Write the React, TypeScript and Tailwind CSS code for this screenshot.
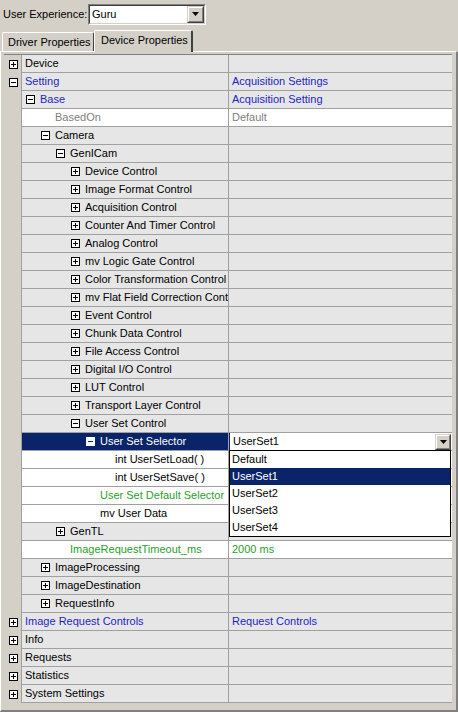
import React from 'react';

type Expander = 'plus' | 'minus' | null;

interface RowData {
  label: string;
  level: number;
  exp: Expander;
  color?: string;
  value?: string;
  valueColor?: string;
  white?: boolean;
  selected?: boolean;
}

const BLUE = 'text-[#1f1fc6]';
const GREEN = 'text-[#2a9f2a]';
const GRAY = 'text-[#808080]';

const ROWS: RowData[] = [
  { label: 'Device', level: 0, exp: 'plus' },
  { label: 'Setting', level: 0, exp: 'minus', color: BLUE, value: 'Acquisition Settings', valueColor: BLUE },
  { label: 'Base', level: 1, exp: 'minus', color: BLUE, value: 'Acquisition Setting', valueColor: BLUE },
  { label: 'BasedOn', level: 2, exp: null, color: GRAY, value: 'Default', valueColor: GRAY, white: true },
  { label: 'Camera', level: 2, exp: 'minus' },
  { label: 'GenICam', level: 3, exp: 'minus' },
  { label: 'Device Control', level: 4, exp: 'plus' },
  { label: 'Image Format Control', level: 4, exp: 'plus' },
  { label: 'Acquisition Control', level: 4, exp: 'plus' },
  { label: 'Counter And Timer Control', level: 4, exp: 'plus' },
  { label: 'Analog Control', level: 4, exp: 'plus' },
  { label: 'mv Logic Gate Control', level: 4, exp: 'plus' },
  { label: 'Color Transformation Control', level: 4, exp: 'plus' },
  { label: 'mv Flat Field Correction Control', level: 4, exp: 'plus' },
  { label: 'Event Control', level: 4, exp: 'plus' },
  { label: 'Chunk Data Control', level: 4, exp: 'plus' },
  { label: 'File Access Control', level: 4, exp: 'plus' },
  { label: 'Digital I/O Control', level: 4, exp: 'plus' },
  { label: 'LUT Control', level: 4, exp: 'plus' },
  { label: 'Transport Layer Control', level: 4, exp: 'plus' },
  { label: 'User Set Control', level: 4, exp: 'minus' },
  { label: 'User Set Selector', level: 5, exp: 'minus', selected: true },
  { label: 'int UserSetLoad( )', level: 6, exp: null, white: true },
  { label: 'int UserSetSave( )', level: 6, exp: null, white: true },
  { label: 'User Set Default Selector', level: 5, exp: null, color: GREEN, white: true },
  { label: 'mv User Data', level: 5, exp: null, white: true },
  { label: 'GenTL', level: 3, exp: 'plus' },
  { label: 'ImageRequestTimeout_ms', level: 3, exp: null, color: GREEN, value: '2000 ms', valueColor: GREEN, white: true },
  { label: 'ImageProcessing', level: 2, exp: 'plus' },
  { label: 'ImageDestination', level: 2, exp: 'plus' },
  { label: 'RequestInfo', level: 2, exp: 'plus' },
  { label: 'Image Request Controls', level: 0, exp: 'plus', color: BLUE, value: 'Request Controls', valueColor: BLUE },
  { label: 'Info', level: 0, exp: 'plus' },
  { label: 'Requests', level: 0, exp: 'plus' },
  { label: 'Statistics', level: 0, exp: 'plus' },
  { label: 'System Settings', level: 0, exp: 'plus' },
];

const INDENT = ['pl-[3px]', 'pl-[4px]', 'pl-[19px]', 'pl-[34px]', 'pl-[49px]', 'pl-[64px]', 'pl-[79px]'];

const USER_SETS = ['Default', 'UserSet1', 'UserSet2', 'UserSet3', 'UserSet4'];

const Box: React.FC<{ type: 'plus' | 'minus'; inverted?: boolean }> = ({ type, inverted }) => {
  const stroke = inverted ? '#ffffff' : '#000000';
  const mark = inverted ? '#0a246a' : '#000000';
  return (
    <svg width="9" height="9" viewBox="0 0 9 9" className="shrink-0">
      <rect x="0.5" y="0.5" width="8" height="8" fill="#ffffff" stroke={stroke} />
      <line x1="2" y1="4.5" x2="7" y2="4.5" stroke={mark} />
      {type === 'plus' && <line x1="4.5" y1="2" x2="4.5" y2="7" stroke={mark} />}
    </svg>
  );
};

const DownArrow: React.FC = () => (
  <svg width="7" height="4" viewBox="0 0 7 4">
    <path d="M0 0h7L3.5 4z" fill="#000" />
  </svg>
);

const ComboButton: React.FC<{ className?: string }> = ({ className }) => (
  <div
    className={`flex items-center justify-center bg-[#d4d0c8] border border-t-[#d4d0c8] border-l-[#d4d0c8] border-r-[#404040] border-b-[#404040] ${className ?? ''}`}
  >
    <div className="w-full h-full flex items-center justify-center border border-t-white border-l-white border-r-[#808080] border-b-[#808080]">
      <DownArrow />
    </div>
  </div>
);

const Row: React.FC<{ row: RowData }> = ({ row }) => {
  const rowBg = row.white ? 'bg-white' : 'bg-[#e6e6e6]';
  const nameBg = row.selected ? 'bg-[#0a246a] text-white' : `${rowBg} ${row.color ?? 'text-black'}`;
  return (
    <div className="flex h-[18px]">
      {/* margin column with top-level expanders */}
      <div className="w-[18px] shrink-0 flex items-center justify-center bg-[#d4d0c8] border-r border-[#a0a0a0] pl-[1px]">
        {row.level === 0 && row.exp && <Box type={row.exp} />}
      </div>
      <div
        className={`w-[207px] shrink-0 flex items-center overflow-hidden whitespace-nowrap border-b border-r border-[#a0a0a0] ${nameBg} ${INDENT[row.level]}`}
      >
        {row.level > 0 && (
          <div className="w-[14px] shrink-0 flex items-center">
            {row.exp && <Box type={row.exp} inverted={row.selected} />}
          </div>
        )}
        <span className="leading-[17px]">{row.label}</span>
      </div>
      <div className={`relative flex-1 flex items-center border-b border-[#a0a0a0] ${rowBg}`}>
        {row.selected ? (
          <>
            <div className="w-full h-full bg-white flex items-center pl-[3px] border-l border-[#0a246a]">
              <span className="flex-1 leading-[17px]">UserSet1</span>
              <ComboButton className="w-[16px] h-[16px] mr-[1px]" />
            </div>
            <div className="absolute left-0 top-[17px] w-[222px] z-20 bg-white border border-black">
              {USER_SETS.map(s => (
                <div
                  key={s}
                  className={`h-[17px] leading-[17px] pl-[2px] ${s === 'UserSet1' ? 'bg-[#0a246a] text-white' : 'text-black'}`}
                >
                  {s}
                </div>
              ))}
            </div>
          </>
        ) : (
          row.value && <span className={`pl-[3px] leading-[17px] ${row.valueColor}`}>{row.value}</span>
        )}
      </div>
    </div>
  );
};

const App: React.FC = () => {
  return (
    <div className="w-[458px] h-[712px] overflow-hidden bg-[#d4d0c8] text-[11px] text-black font-['Liberation_Sans',Arial,sans-serif] select-none">
      {/* top bar */}
      <div className="h-[28px] flex items-center pl-[3px]">
        <span className="w-[85px]">User Experience:</span>
        <div className="w-[118px] h-[21px] border border-t-[#808080] border-l-[#808080] border-r-white border-b-white">
          <div className="w-full h-full flex items-center bg-white border border-t-[#404040] border-l-[#404040] border-r-[#d4d0c8] border-b-[#d4d0c8]">
            <span className="flex-1 pl-[2px]">Guru</span>
            <ComboButton className="w-[17px] h-[17px]" />
          </div>
        </div>
      </div>

      {/* tabs */}
      <div className="h-[23px] flex items-end pl-[2px]">
        <div className="w-[92px] h-[19px] flex items-center pl-[5px] border-t border-l border-white border-r border-r-[#404040] rounded-t-[2px] mb-[0px]">
          Driver Properties
        </div>
        <div className="relative z-10 -mb-px w-[99px] h-[22px] flex items-center pl-[6px] pb-[2px] bg-[#d4d0c8] border-t border-l border-white border-r-2 border-r-[#404040] rounded-t-[2px]">
          Device Properties
        </div>
      </div>

      {/* panel */}
      <div className="h-[661px] border-t border-l border-white border-r-2 border-r-[#808080] border-b-2 border-b-[#808080] pt-[2px] pl-[3px] pr-[2px]">
        <div className="w-[448px] border-t border-[#808080]">
          {ROWS.map((r, i) => (
            <Row key={i} row={r} />
          ))}
        </div>
      </div>
    </div>
  );
};

export default App;
